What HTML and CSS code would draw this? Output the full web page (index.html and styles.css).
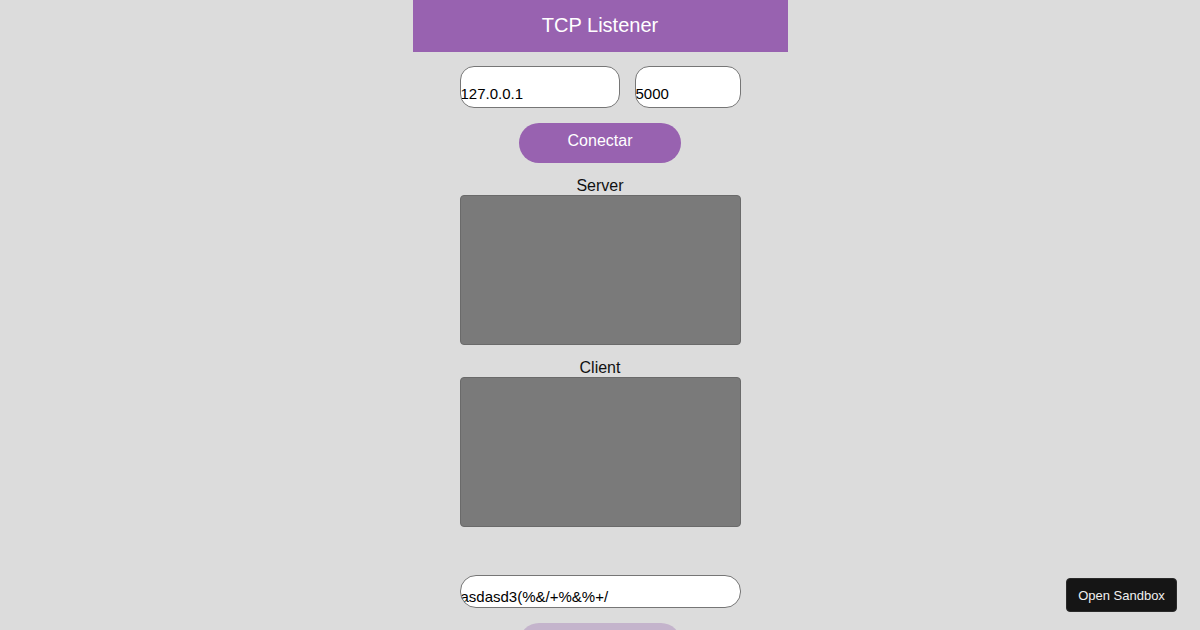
FILE: index.html
```html
<!DOCTYPE html>
<html>
<head>
<meta charset="utf-8">
<link rel="stylesheet" href="styles.css">
</head>
<body>
<div class="app">
  <header class="header">TCP Listener</header>
  <div class="row">
    <input class="field ip" type="text" value="127.0.0.1">
    <input class="field port" type="text" value="5000">
  </div>
  <button class="btn">Conectar</button>
  <div class="label first">Server</div>
  <div class="panel"></div>
  <div class="label">Client</div>
  <div class="panel"></div>
  <input class="field msg" type="text" value="asdasd3(%&amp;/+%&amp;%+/">
  <button class="btn disabled">Enviar</button>
</div>
<button class="sandbox">Open Sandbox</button>
</body>
</html>
```
FILE: styles.css
```css
html, body {
  margin: 0;
  padding: 0;
  background: #dcdcdc;
  font-family: "Liberation Sans", Arial, sans-serif;
  overflow: hidden;
}
.app {
  width: 375px;
  margin: 0 auto;
  display: flex;
  flex-direction: column;
  align-items: center;
}
.header {
  width: 100%;
  height: 52px;
  background: #9862b0;
  color: #fff;
  font-size: 20px;
  display: flex;
  align-items: center;
  justify-content: center;
  padding-bottom: 2px;
  box-sizing: border-box;
}
.row {
  display: flex;
  gap: 15px;
  margin-top: 14px;
}
.field {
  box-sizing: border-box;
  height: 42px;
  border: 1px solid #767676;
  border-radius: 14px;
  background: #fff;
  font-family: "Liberation Sans", Arial, sans-serif;
  font-size: 15px;
  color: #000;
  padding: 13px 0 0 0;
  margin: 0;
  outline: none;
}
.ip { width: 160px; }
.port { width: 106px; }
.btn {
  width: 162px;
  height: 40px;
  margin-top: 15px;
  border: none;
  border-radius: 20px;
  background: #9862b0;
  color: #fff;
  font-family: "Liberation Sans", Arial, sans-serif;
  font-size: 16px;
  padding: 0 0 4px 0;
}
.label {
  font-size: 16px;
  color: #111;
  line-height: 18px;
  margin-top: 14px;
}
.label.first { margin-top: 14px; }
.panel {
  box-sizing: border-box;
  width: 281px;
  height: 150px;
  background: #7a7a7a;
  border: 1px solid #6a6a6a;
  border-radius: 4px;
}
.msg {
  width: 281px;
  height: 33px;
  border-radius: 16px;
  margin-top: 48px;
  padding-top: 10px;
}
.btn.disabled {
  background: #c4b4cc;
  margin-top: 15px;
}
.sandbox {
  position: fixed;
  right: 23px;
  bottom: 18px;
  width: 111px;
  height: 34px;
  background: #151515;
  color: #f0f0f0;
  border: 1px solid #2a2a2a;
  border-radius: 4px;
  font-family: "Liberation Sans", Arial, sans-serif;
  font-size: 13px;
  padding: 0;
}
```
